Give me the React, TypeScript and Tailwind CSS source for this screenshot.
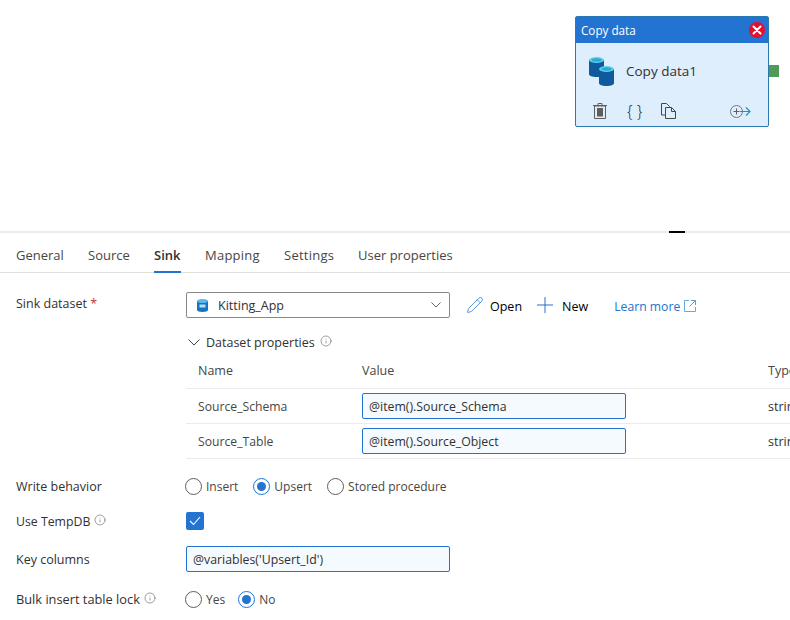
import { Info, Pencil } from "lucide-react";

const tabs = [
    { label: "General", cls: "w-[48px]" },
    { label: "Source", cls: "w-[42px]" },
    { label: "Sink", cls: "w-[27px]" },
    { label: "Mapping", cls: "w-[55px] tracking-[0.25px]" },
    { label: "Settings", cls: "w-[50px] tracking-[0.25px]" },
    { label: "User properties", cls: "w-[95px]" },
];

function DbIcon({ x, y }: { x: number; y: number }) {
    return (
        <g transform={`translate(${x} ${y})`}>
            <path d="M0 3v14c0 2 3 3 7.500 3s7.500-1 7.500-3V3z" fill="#0f5a9c" />
            <ellipse cx="7.500" cy="3" rx="7.500" ry="3" fill="#5fd0ea" />
            <ellipse cx="7.500" cy="3" rx="5" ry="1.700" fill="#2aa9d6" />
        </g>
    );
}

function Chevron({ size }: { size: number }) {
    return (
        <svg viewBox="0 0 12 7" fill="none" width={size} height={(size * 7) / 12} className="shrink-0">
            <path d="M.5.5L6 6 11.500.5" stroke="#484644" />
        </svg>
    );
}

function Radio({ label, checked }: { label: string; checked?: boolean }) {
    return (
        <div className="flex items-center gap-[4px]">
            <span
                className={`flex h-[17px] w-[17px] items-center justify-center rounded-full border ${checked ? "border-[#2273d2]" : "border-[#605e5c]"}`}
            >
                {checked && <span className="h-[9px] w-[9px] rounded-full bg-[#2273d2]" />}
            </span>
            <span>{label}</span>
        </div>
    );
}

function TextBox({ value, width }: { value: string; width: string }) {
    return (
        <div className={`flex h-[26px] items-center rounded-[2px] border border-[#2273d2] bg-[#f5fafe] pl-[6px] text-[12.300px] text-[#323130] ${width}`}>
            {value}
        </div>
    );
}

function Hint() {
    return <Info className="ml-[4px] mb-[3px] h-[12px] w-[12px] shrink-0 text-[#605e5c]" strokeWidth={1.2} />;
}

function PropRow({ name, value }: { name: string; value: string }) {
    return (
        <div className="flex h-[35px] items-center border-b border-[#edebe9] pl-[12px]">
            <span className="w-[164px] shrink-0 text-[12.200px] text-[#484644]">{name}</span>
            <div className="w-[406px] shrink-0">
                <TextBox value={value} width="w-[264px]" />
            </div>
            <span className="text-[#323130]">string</span>
        </div>
    );
}

function CopyNode() {
    return (
        <div className="absolute left-[575px] top-[16px] h-[111px] w-[194px] rounded-[2px] border border-[#2a7ab0] bg-[#deeefc]">
            <div className="flex h-[26px] items-center justify-between bg-[#2273d2] pl-[5px] pr-[3px] text-[11.700px] text-white">
                <span>Copy data</span>
                <span className="flex h-[16px] w-[16px] items-center justify-center rounded-full bg-[#e3102e]">
                    <svg viewBox="0 0 10 10" className="h-[10px] w-[10px]">
                        <path d="M1.500 1.500l7 7M8.500 1.500l-7 7" stroke="#fff" strokeWidth="2" strokeLinecap="round" />
                    </svg>
                </span>
            </div>
            <div className="flex h-[46px] items-center pl-[13px] pt-[11px]">
                <svg viewBox="0 0 25 29" className="h-[29px] w-[25px]">
                    <DbIcon x={0} y={0} />
                    <DbIcon x={10} y={9} />
                </svg>
                <span className="ml-[12px] text-[13.500px] text-[#323130]">Copy data1</span>
            </div>
            <div className="flex h-[34px] items-center pl-[17px] pt-[10px]">
                <svg viewBox="0 0 14 16" fill="none" className="h-[16px] w-[14px] text-[#605e5c]">
                    <path d="M0 2.500h14M5 2.500V.5h4v2" stroke="currentColor" />
                    <path d="M1.500 3v12.500h11V3z" stroke="currentColor" />
                    <path d="M4 5h6v8.500H4z" fill="currentColor" />
                </svg>
                <span className="ml-[20px] w-[14px] whitespace-nowrap text-[16px] font-light leading-none text-[#201f1e]">{"{ }"}</span>
                <svg viewBox="0 0 15 16" fill="none" stroke="#484644" className="ml-[20px] h-[16px] w-[15px]">
                    <path d="M4.500 12H.5V.5h5l3 3v1" />
                    <path d="M4.500 4.500h6l4 4v7h-10zM10.500 4.500v4h4" />
                </svg>
                <svg viewBox="0 0 21 13" fill="none" className="ml-[54px] h-[13px] w-[21px]">
                    <circle cx="6.500" cy="6.500" r="6" stroke="#797775" />
                    <path d="M3.500 6.500h6M6.500 3.500v6" stroke="#605e5c" />
                    <path d="M10 6.500h10M16 2.500l4 4-4 4" stroke="#1a94c8" strokeWidth="1.200" />
                </svg>
            </div>
        </div>
    );
}

export default function App() {
    return (
        <div className="relative h-[620px] w-[790px] overflow-hidden bg-white font-['Open_Sans',sans-serif] text-[12.500px] leading-[17px] text-[#323130]">
            <div className="h-[231px]" />
            <CopyNode />
            <div className="absolute left-[769px] top-[65px] h-[12px] w-[10px] bg-[#4f9a59]" />
            <div className="absolute left-[669px] top-[231px] h-[2px] w-[16px] bg-black" />

            <div className="h-[2px] bg-[#edebe9]" />

            <div className="flex h-[40px] gap-[24px] border-b border-[#e1dfdd] pl-[16px] text-[13px]">
                {tabs.map((t) => (
                    <div
                        key={t.label}
                        className={`flex h-[40px] items-center whitespace-nowrap border-b-[2px] pt-[7px] ${t.cls} ${t.label === "Sink" ? "border-[#2273d2] font-semibold text-[#323130]" : "border-transparent text-[#484644]"}`}
                    >
                        {t.label}
                    </div>
                ))}
            </div>

            <div className="px-[16px] pt-[19px]">
                <div className="flex h-[26px] items-center">
                    <span className="w-[170px] shrink-0 pb-[3px]">
                        Sink dataset <span className="text-[#c4314b]">*</span>
                    </span>
                    <div className="flex h-[26px] w-[264px] shrink-0 items-center rounded-[2px] border border-[#8a8886] pl-[10px] pr-[8px]">
                        <svg viewBox="0 0 11 13" className="h-[13px] w-[11px]">
                            <path d="M0 2v9c0 1.200 2.500 2 5.500 2s5.500-.8 5.500-2V2z" fill="#1672c4" />
                            <ellipse cx="5.500" cy="2" rx="5.500" ry="2" fill="#5cb8ea" />
                            <rect x="2.500" y="5.500" width="6" height="3" fill="#bcdcf4" />
                        </svg>
                        <span className="ml-[10px] flex-1">Kitting_App</span>
                        <Chevron size={10} />
                    </div>
                    <Pencil className="ml-[16px] h-[18px] w-[18px] shrink-0 text-[#2273d2]" strokeWidth={1} />
                    <span className="ml-[6px] pt-[2px] text-black">Open</span>
                    <svg viewBox="0 0 16 16" fill="none" className="ml-[15px] h-[16px] w-[16px] shrink-0">
                        <path d="M8 0v16M0 8h16" stroke="#2273d2" />
                    </svg>
                    <span className="ml-[9px] pt-[2px] text-black">New</span>
                    <span className="ml-[26px] whitespace-nowrap pt-[2px] text-[12.200px] text-[#2273d2]">Learn more</span>
                    <svg viewBox="0 0 12 12" fill="none" className="ml-[4px] mt-[2px] h-[12px] w-[12px] shrink-0">
                        <path d="M5 .5H.5v11h11V7" stroke="#6aa5e6" />
                        <path d="M7 .5h4.500V5M11.500.5L5.500 6.500" stroke="#5b9be0" />
                    </svg>
                </div>

                <div className="ml-[170px] w-[640px]">
                    <div className="mt-[16px] flex h-[17px] items-center">
                        <span className="ml-[2px]">
                            <Chevron size={12} />
                        </span>
                        <span className="ml-[6px] font-medium">Dataset properties</span>
                        <span className="ml-[1px] flex">
                            <Hint />
                        </span>
                    </div>
                    <div className="mt-[10px] flex h-[28px] items-center border-b border-[#edebe9] pb-[9px] pl-[12px] font-medium text-[#484644]">
                        <span className="w-[164px] shrink-0">Name</span>
                        <span className="w-[406px] shrink-0">Value</span>
                        <span>Type</span>
                    </div>
                    <PropRow name="Source_Schema" value="@item().Source_Schema" />
                    <PropRow name="Source_Table" value="@item().Source_Object" />
                </div>

                <div className="mt-[18px] flex h-[18px] items-center">
                    <span className="w-[170px] shrink-0">Write behavior</span>
                    <div className="-ml-[1px] flex gap-[15px] text-[12px] text-[#484644]">
                        <Radio label="Insert" />
                        <Radio label="Upsert" checked />
                        <Radio label="Stored procedure" />
                    </div>
                </div>

                <div className="mt-[17px] flex h-[18px] items-center">
                    <span className="flex w-[170px] shrink-0 items-center text-[12.300px]">
                        Use TempDB
                        <Hint />
                    </span>
                    <span className="flex h-[18px] w-[18px] items-center justify-center rounded-[2px] bg-[#2273d2]">
                        <svg viewBox="0 0 12 10" fill="none" className="h-[10px] w-[12px]">
                            <path d="M1 5l3.500 3.500L11 1" stroke="#fff" strokeWidth="1.100" />
                        </svg>
                    </span>
                </div>

                <div className="mt-[16px] flex items-center">
                    <span className="w-[170px] shrink-0">Key columns</span>
                    <TextBox value="@variables('Upsert_Id')" width="w-[264px]" />
                </div>

                <div className="mt-[18px] flex h-[18px] items-center">
                    <span className="flex w-[170px] shrink-0 items-center text-[12.800px]">
                        Bulk insert table lock
                        <Hint />
                    </span>
                    <div className="-ml-[1px] flex gap-[13px] text-[12px] text-[#484644]">
                        <Radio label="Yes" />
                        <Radio label="No" checked />
                    </div>
                </div>
            </div>
        </div>
    );
}
